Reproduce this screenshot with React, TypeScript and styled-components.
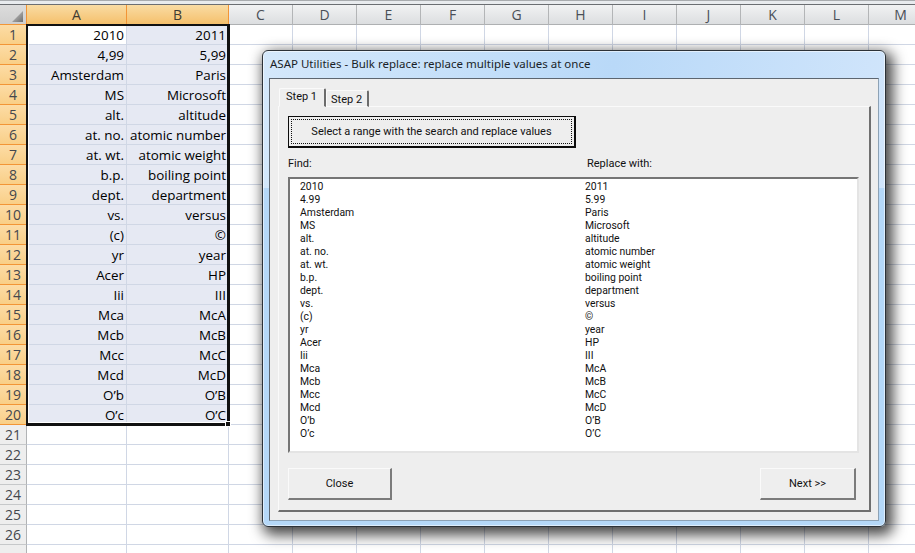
import React from 'react';
import styled, { createGlobalStyle } from 'styled-components';

const GlobalStyle = createGlobalStyle`
  html, body {
    margin: 0;
    height: 100%;
    overflow: hidden;
    background: #ffffff;
  }
`;

const COLUMNS = [
  { name: 'A', width: 100, selected: true },
  { name: 'B', width: 102, selected: true },
  { name: 'C', width: 64 },
  { name: 'D', width: 64 },
  { name: 'E', width: 64 },
  { name: 'F', width: 64 },
  { name: 'G', width: 64 },
  { name: 'H', width: 64 },
  { name: 'I', width: 64 },
  { name: 'J', width: 64 },
  { name: 'K', width: 64 },
  { name: 'L', width: 64 },
  { name: 'M', width: 64 },
];

const VALUES: [string, string, string, string][] = [
  ['2010', '2011', '2010', '2011'],
  ['4,99', '5,99', '4.99', '5.99'],
  ['Amsterdam', 'Paris', 'Amsterdam', 'Paris'],
  ['MS', 'Microsoft', 'MS', 'Microsoft'],
  ['alt.', 'altitude', 'alt.', 'altitude'],
  ['at. no.', 'atomic number', 'at. no.', 'atomic number'],
  ['at. wt.', 'atomic weight', 'at. wt.', 'atomic weight'],
  ['b.p.', 'boiling point', 'b.p.', 'boiling point'],
  ['dept.', 'department', 'dept.', 'department'],
  ['vs.', 'versus', 'vs.', 'versus'],
  ['(c)', '©', '(c)', '©'],
  ['yr', 'year', 'yr', 'year'],
  ['Acer', 'HP', 'Acer', 'HP'],
  ['Iii', 'III', 'Iii', 'III'],
  ['Mca', 'McA', 'Mca', 'McA'],
  ['Mcb', 'McB', 'Mcb', 'McB'],
  ['Mcc', 'McC', 'Mcc', 'McC'],
  ['Mcd', 'McD', 'Mcd', 'McD'],
  ['O’b', 'O’B', 'O’b', 'O’B'],
  ['O’c', 'O’C', 'O’c', 'O’C'],
];

// the last row only shows its top pixels in the window, so it gets no label
const ROW_COUNT = 27;

const Screen = styled.div`
  position: relative;
  width: 915px;
  height: 553px;
  overflow: hidden;
  background: #ffffff;
`;

const TopStrip = styled.div`
  height: 5px;
  box-sizing: border-box;
  background: #e8ebee;
  border-top: 1px solid #a8abae;
  border-bottom: 1px solid #6b6e72;
`;

const Row = styled.div`
  display: flex;
  height: 20px;
`;

const CornerCell = styled.div`
  position: relative;
  width: 27px;
  flex: none;
  box-sizing: border-box;
  background: linear-gradient(#dcdcdc, #cfcfcf);
  border-right: 1px solid #f29536;
  border-bottom: 1px solid #f29536;
`;

const CornerMark = styled.svg`
  position: absolute;
  right: 3px;
  bottom: 2px;
  width: 11px;
  height: 11px;
`;

const ColumnHead = styled.div<{ $width: number; $selected?: boolean }>`
  width: ${(p) => p.$width}px;
  flex: none;
  box-sizing: border-box;
  text-align: center;
  font: 14px/19px 'Open Sans', 'Liberation Sans', sans-serif;
  color: ${(p) => (p.$selected ? '#3f3b33' : '#4a4f57')};
  background: ${(p) =>
    p.$selected
      ? 'linear-gradient(#f9dca4, #f5c06c)'
      : 'linear-gradient(#f1f2f3, #dcdee0)'};
  border-right: 1px solid ${(p) => (p.$selected ? '#f29536' : '#b3b5b7')};
  border-bottom: 1px solid ${(p) => (p.$selected ? '#f29536' : '#aeb0b2')};
`;

const RowHead = styled.div<{ $selected?: boolean }>`
  width: 27px;
  flex: none;
  box-sizing: border-box;
  text-align: center;
  font: 14px/19px 'Open Sans', 'Liberation Sans', sans-serif;
  color: #44474d;
  background: ${(p) => (p.$selected ? 'linear-gradient(#fcdca6, #f9cf87)' : '#eeeeee')};
  border-right: 1px solid ${(p) => (p.$selected ? '#f29536' : '#b1b3b5')};
  border-bottom: 1px solid ${(p) => (p.$selected ? '#f29536' : '#c6c8ca')};
`;

const Cell = styled.div<{ $width: number; $tone?: 'range' | 'active' }>`
  width: ${(p) => p.$width}px;
  flex: none;
  box-sizing: border-box;
  padding-right: 2px;
  overflow: hidden;
  text-align: right;
  white-space: nowrap;
  font: 13.4px/20px 'Open Sans', 'Liberation Sans', sans-serif;
  color: #000000;
  background: ${(p) => (p.$tone === 'range' ? '#e6e9f3' : '#ffffff')};
  border-right: 1px solid #d0d7e5;
  border-bottom: 1px solid #d0d7e5;
`;

const Selection = styled.div`
  position: absolute;
  left: 26px;
  top: 24px;
  width: 204px;
  height: 402px;
  box-sizing: border-box;
  border: solid #111111;
  border-width: 2px 3px 3px 2px;
  box-shadow: inset 1px 0 0 #ffffff, inset 0 -1px 0 #ffffff;
  pointer-events: none;
`;

const SelectionHandle = styled.div`
  position: absolute;
  right: -4px;
  bottom: -4px;
  width: 4px;
  height: 4px;
  background: #111111;
  border: 1px solid #ffffff;
`;

const Dialog = styled.div`
  position: absolute;
  left: 262px;
  top: 50px;
  width: 624px;
  height: 477px;
  box-sizing: border-box;
  display: flex;
  flex-direction: column;
  padding: 0 6px 6px;
  border: 1px solid #2c3238;
  border-radius: 6px;
  background:
    linear-gradient(#b5d8f8, #b5d8f8) bottom / 100% calc(100% - 137px) no-repeat,
    linear-gradient(100deg, #d4e8fb 0%, #b9d9f8 50%, #d6e8fc 100%);
  box-shadow: 0 0 0 1px rgba(255, 255, 255, 0.55) inset, 4px 5px 14px 3px rgba(0, 0, 0, 0.72);
  font: 11px 'Roboto', 'Liberation Sans', sans-serif;
  color: #111111;
`;

const TitleBar = styled.div`
  box-sizing: border-box;
  height: 27px;
  flex: none;
  padding: 1px 0 0 1px;
  font: 11.5px/23px 'Noto Sans', 'DejaVu Sans', sans-serif;
  color: #1a1f28;
`;

const ClientArea = styled.div`
  flex: 1;
  display: flex;
  flex-direction: column;
  padding: 9px 7px 8px 8px;
  background: #eeeeee;
  border: 1px solid;
  border-color: #5d6670 #8da2b5 #8da2b5 #5d6670;
`;

const TabStrip = styled.div`
  display: flex;
  align-items: flex-end;
  flex: none;
  height: 19px;
  padding-left: 1px;
  position: relative;
  z-index: 1;
  margin-bottom: -1px;
`;

const Tab = styled.div<{ $active?: boolean }>`
  box-sizing: border-box;
  height: ${(p) => (p.$active ? 19 : 17)}px;
  padding: 0 ${(p) => (p.$active ? 7 : 5)}px 0 ${(p) => (p.$active ? 6 : 4)}px;
  line-height: ${(p) => (p.$active ? 16 : 17)}px;
  background: #eeeeee;
  border-top: 1px solid #fafafa;
  border-left: 1px solid #fafafa;
  border-right: 2px solid #6c6c6c;
  border-radius: 2px 2px 0 0;
  border-bottom: ${(p) => (p.$active ? '1px solid #eeeeee' : '1px solid #fafafa')};
`;

const TabPanel = styled.div`
  flex: 1;
  display: flex;
  flex-direction: column;
  padding: 9px 8px 10px 9px;
  border-top: 1px solid #fafafa;
  border-left: 1px solid #fafafa;
  border-right: 2px solid #6f6f6f;
  border-bottom: 2px solid #6f6f6f;
`;

const Button = styled.button<{ $width: number }>`
  box-sizing: border-box;
  width: ${(p) => p.$width}px;
  height: 32px;
  padding: 0;
  background: #eeeeee;
  color: #111111;
  font: inherit;
  border: 1px solid;
  border-color: #fafafa #7b7b7b #7b7b7b #fafafa;
  border-bottom-width: 2px;
  border-right-width: 2px;
`;

const DefaultButton = styled.button`
  box-sizing: border-box;
  flex: none;
  width: 288px;
  height: 32px;
  padding: 2px;
  background: #eeeeee;
  color: #111111;
  font: inherit;
  border: 1px solid #0c0c0c;
  border-bottom-width: 2px;
  border-right-width: 2px;
`;

const FocusRing = styled.span`
  display: block;
  height: 100%;
  box-sizing: border-box;
  line-height: 23px;
  border: 1px dotted #111111;
`;

const FieldLabels = styled.div`
  display: grid;
  grid-template-columns: 299px 1fr;
  flex: none;
  height: 16px;
  margin-top: 8px;
  line-height: 16px;
`;

const ValueList = styled.div`
  box-sizing: border-box;
  flex: none;
  margin-top: 5px;
  width: 571px;
  height: 276px;
  padding: 1px 0 0 10px;
  background: #ffffff;
  border: 2px solid;
  border-color: #757575 #e4e4e4 #e4e4e4 #757575;
  display: grid;
  grid-template-columns: 285px 1fr;
  grid-auto-rows: 13px;
  font-size: 10.4px;
  line-height: 13px;
`;

const Actions = styled.div`
  display: flex;
  justify-content: space-between;
  margin-top: 15px;
  width: 568px;
`;

export default function App() {
  const rows = Array.from({ length: ROW_COUNT - 1 }, (_, i) => i);

  return (
    <>
      <GlobalStyle />
      <Screen>
        <TopStrip />
        <Row>
          <CornerCell>
            <CornerMark viewBox="0 0 11 11">
              <defs>
                <linearGradient id="corner" x1="0" y1="0" x2="1" y2="1">
                  <stop offset="0.4" stopColor="#a8a8a8" />
                  <stop offset="1" stopColor="#6e6e6e" />
                </linearGradient>
              </defs>
              <polygon points="11,0 11,11 0,11" fill="url(#corner)" />
            </CornerMark>
          </CornerCell>
          {COLUMNS.map((c) => (
            <ColumnHead key={c.name} $width={c.width} $selected={c.selected}>
              {c.name}
            </ColumnHead>
          ))}
        </Row>
        {rows.map((r) => {
          const data = VALUES[r];
          return (
            <Row key={r}>
              <RowHead $selected={!!data}>{r + 1}</RowHead>
              {COLUMNS.map((c, i) => (
                <Cell
                  key={c.name}
                  $width={c.width}
                  $tone={data && i < 2 ? (r === 0 && i === 0 ? 'active' : 'range') : undefined}
                >
                  {data && i < 2 ? data[i] : ''}
                </Cell>
              ))}
            </Row>
          );
        })}
        <Row>
          <RowHead />
          {COLUMNS.map((c) => (
            <Cell key={c.name} $width={c.width} />
          ))}
        </Row>
        <Selection>
          <SelectionHandle />
        </Selection>
        <Dialog>
          <TitleBar>ASAP Utilities - Bulk replace: replace multiple values at once</TitleBar>
          <ClientArea>
            <TabStrip>
              <Tab $active>Step 1</Tab>
              <Tab>Step 2</Tab>
            </TabStrip>
            <TabPanel>
              <DefaultButton>
                <FocusRing>Select a range with the search and replace values</FocusRing>
              </DefaultButton>
              <FieldLabels>
                <span>Find:</span>
                <span>Replace with:</span>
              </FieldLabels>
              <ValueList>
                {VALUES.map((v) => (
                  <React.Fragment key={v[2]}>
                    <span>{v[2]}</span>
                    <span>{v[3]}</span>
                  </React.Fragment>
                ))}
              </ValueList>
              <Actions>
                <Button $width={104}>Close</Button>
                <Button $width={96}>Next &gt;&gt;</Button>
              </Actions>
            </TabPanel>
          </ClientArea>
        </Dialog>
      </Screen>
    </>
  );
}
